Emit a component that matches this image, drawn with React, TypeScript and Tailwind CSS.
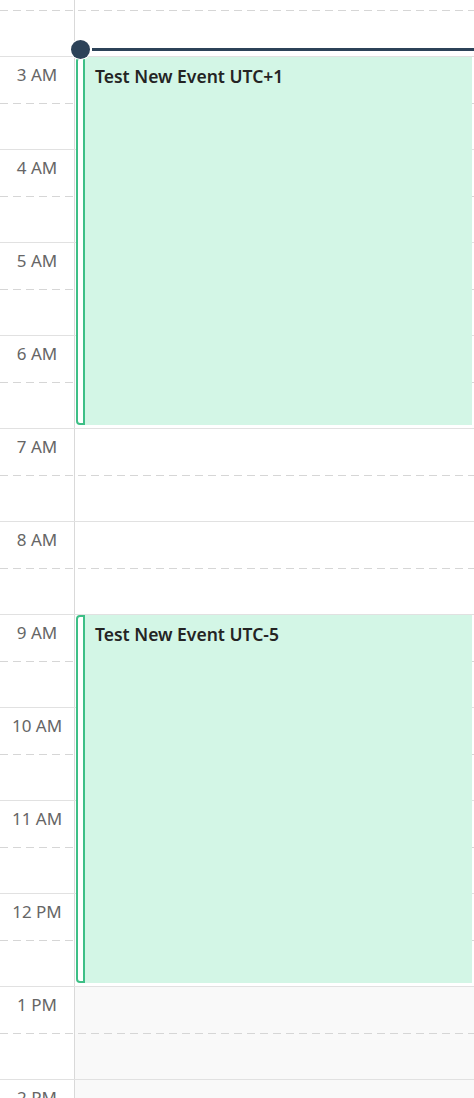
import React from "react";

const hours = [
  "",
  "3 AM",
  "4 AM",
  "5 AM",
  "6 AM",
  "7 AM",
  "8 AM",
  "9 AM",
  "10 AM",
  "11 AM",
  "12 PM",
  "1 PM",
  "2 PM",
];

function Event({ title, top }: { title: string; top: string }) {
  return (
    <div className={`absolute left-[76px] w-[396px] h-[368px] flex ${top}`}>
      <div className="w-[9px] h-full border-2 border-[#3dbf86] rounded-l-[4px] bg-white" />
      <div className="flex-1 bg-[#d3f6e6] pl-[10px] pt-[8px]">
        <div className="text-[17.5px] leading-[22px] font-semibold text-[#242424] [font-family:'Noto_Sans','Open_Sans',sans-serif]">
          {title}
        </div>
      </div>
    </div>
  );
}

export default function App() {
  return (
    <div className="relative w-[474px] h-[1098px] overflow-hidden bg-white [font-family:'Noto_Sans','Open_Sans',sans-serif]">
      <div className="-mt-[37px]">
        {hours.map((h, i) => (
          <div
            key={i}
            className="relative grid grid-cols-[75px_1fr] h-[93px] border-t border-[#e1e1e1]"
          >
            <div className="border-r border-[#d9d9d9] text-center pt-[7px] text-[17px] leading-[22px] text-[#666666]">
              {h}
            </div>
            <div className={i >= 11 ? "bg-[#f9f9f9]" : "bg-white"} />
            <div className="absolute left-0 right-0 top-[46px] h-px bg-[repeating-linear-gradient(to_right,#d6d6d6_0,#d6d6d6_8px,transparent_8px,transparent_13px)]" />
          </div>
        ))}
      </div>

      <Event title="Test New Event UTC+1" top="top-[57px]" />
      <Event title="Test New Event UTC-5" top="top-[615px]" />

      <div className="absolute left-[89px] right-0 top-[46px] h-[7px] bg-white" />
      <div className="absolute left-[92px] right-0 top-[48px] h-[3px] bg-[#2c4258]" />
      <div className="absolute left-[70px] top-[39px] w-[21px] h-[21px] rounded-full bg-white flex items-center justify-center">
        <div className="w-[19px] h-[19px] rounded-full bg-[#2c4258]" />
      </div>
    </div>
  );
}
